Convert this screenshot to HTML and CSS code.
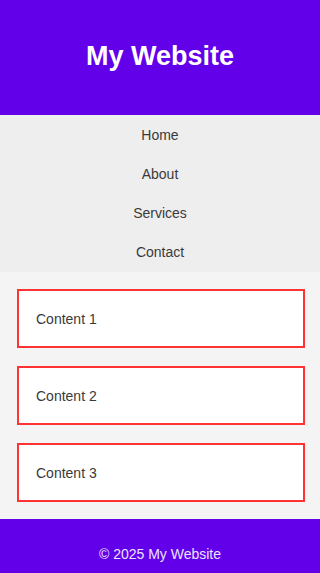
FILE: index.html
```html
<!DOCTYPE html>
<html lang="en">
<head>
<meta charset="utf-8">
<meta name="viewport" content="width=device-width, initial-scale=1">
<title>My Website</title>
<link rel="stylesheet" href="styles.css">
</head>
<body>
<header class="site-header">
  <h1 class="site-title">My Website</h1>
</header>
<nav class="site-nav">
  <a class="nav-link" href="#">Home</a>
  <a class="nav-link" href="#">About</a>
  <a class="nav-link" href="#">Services</a>
  <a class="nav-link" href="#">Contact</a>
</nav>
<main class="content">
  <div class="card">Content 1</div>
  <div class="card">Content 2</div>
  <div class="card">Content 3</div>
</main>
<footer class="site-footer">
  <p class="footer-text">&copy; 2025 My Website</p>
</footer>
</body>
</html>
```
FILE: styles.css
```css
* { box-sizing: border-box; }
html, body { margin: 0; padding: 0; }
body {
  font-family: "Liberation Sans", Arial, sans-serif;
  font-size: 14px;
  line-height: 16px;
  color: #3a3a3a;
  background: #f4f4f4;
}
.site-header {
  background: #6200ea;
  height: 115px;
  padding-top: 40px;
  text-align: center;
}
.site-title {
  margin: 0;
  font-size: 27px;
  line-height: 32px;
  font-weight: bold;
  color: #fff;
}
.site-nav {
  background: #eeeeee;
  display: flex;
  flex-direction: column;
  padding-bottom: 1px;
}
.nav-link {
  display: block;
  text-align: center;
  padding: 11.5px 0;
  color: #3a3a3a;
  text-decoration: none;
}
.content {
  background: #f4f4f4;
  padding: 17px 15px 17px 17px;
  display: flex;
  flex-direction: column;
  gap: 18px;
}
.card {
  background: #fff;
  border: 2px solid #ff3333;
  height: 59px;
  padding: 0 17px;
  display: flex;
  align-items: center;
}
.site-footer {
  background: #6200ea;
  height: 54px;
  padding-top: 27px;
  text-align: center;
}
.footer-text {
  margin: 0;
  color: #ece4ff;
}
```
